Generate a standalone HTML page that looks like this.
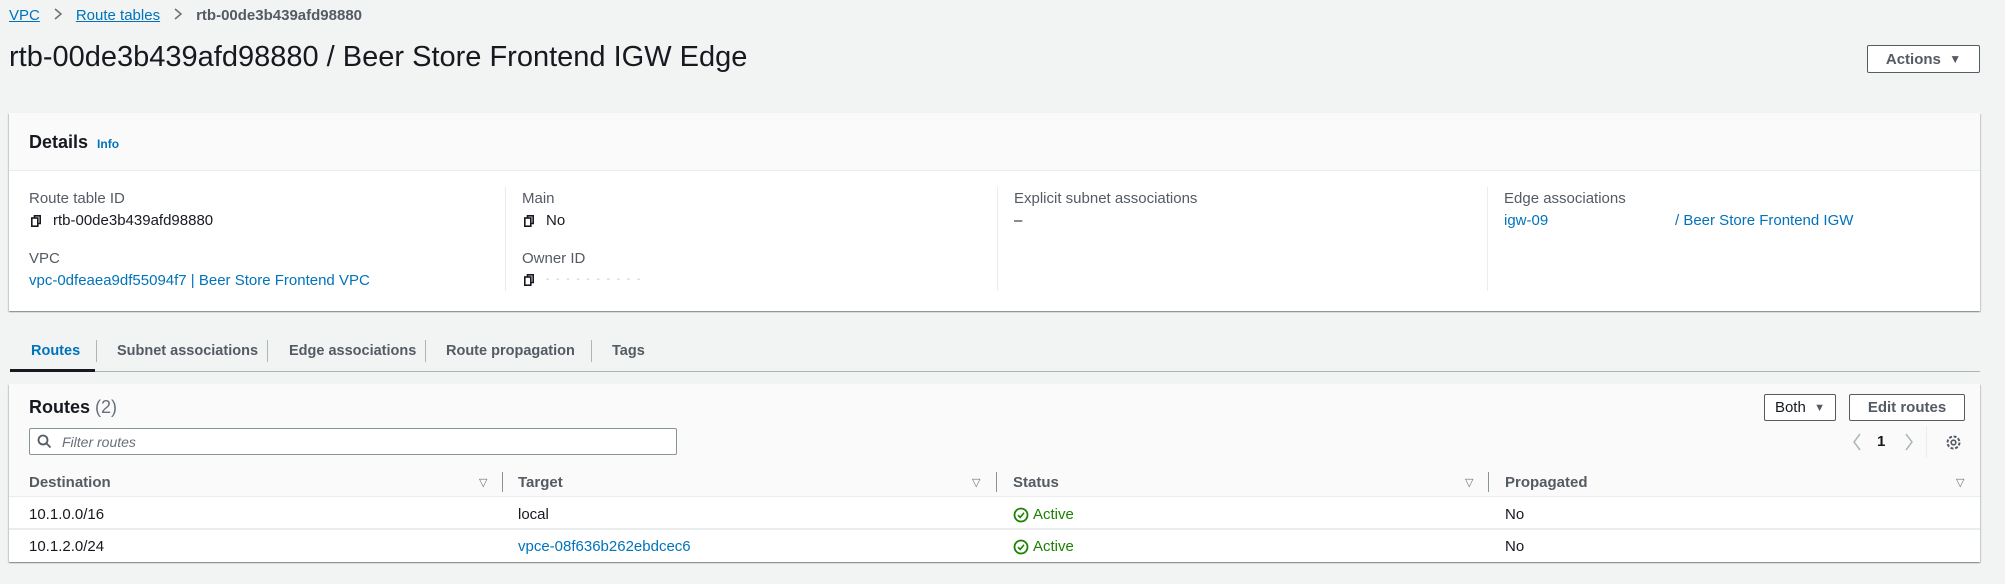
<!DOCTYPE html>
<html><head><meta charset="utf-8"><style>
*{box-sizing:border-box;margin:0;padding:0}
body{width:2005px;height:584px;background:#f2f3f3;font-family:"Liberation Sans",sans-serif;color:#16191f;position:relative;overflow:hidden;font-size:15px}
.a{position:absolute;white-space:nowrap}
.link{color:#0073bb}
.lbl{color:#545b64}
.btn{position:absolute;border:1.5px solid #545b64;background:#fff;border-radius:2px;font-weight:bold;color:#545b64;font-size:15px;display:flex;align-items:center;justify-content:center}
.panel{position:absolute;background:#fff;box-shadow:0 1px 1px 0 rgba(0,28,36,.3),1px 1px 1px 0 rgba(0,28,36,.15),-1px 1px 1px 0 rgba(0,28,36,.15)}
.vd{position:absolute;width:1px;background:#eaeded}
.tri{position:absolute;font-size:11px;color:#687078}
.tab{position:absolute;white-space:nowrap;font-weight:bold;font-size:14.5px;color:#545b64}
.cp{position:absolute;width:10px;height:12px}
</style></head><body>
<div class="a" style="left:9px;top:7px;font-size:15px"><span class="link" style="text-decoration:underline">VPC</span><svg width="36" height="14" style="vertical-align:-1px"><path d="M15 2L21 7L15 12" fill="none" stroke="#687078" stroke-width="1.5"/></svg><span class="link" style="text-decoration:underline">Route tables</span><svg width="36" height="14" style="vertical-align:-1px"><path d="M15 2L21 7L15 12" fill="none" stroke="#687078" stroke-width="1.5"/></svg><span style="color:#545b64;font-weight:bold">rtb-00de3b439afd98880</span></div>
<div class="a" style="left:9px;top:41px;font-size:29px">rtb-00de3b439afd98880 / Beer Store Frontend IGW Edge</div>
<div class="btn" style="left:1867px;top:45px;width:113px;height:28px">Actions&nbsp;&nbsp;<span style="font-size:12px">&#9660;</span></div>

<div class="panel" style="left:9px;top:113px;width:1971px;height:198px">
 <div style="position:absolute;left:0;top:0;right:0;height:58px;background:#fafafa;border-bottom:1px solid #eaeded"></div>
</div>
<div class="a" style="left:29px;top:132px;font-size:18px;font-weight:bold">Details <span class="link" style="font-size:12px;margin-left:4px">Info</span></div>
<div class="vd" style="left:505px;top:187px;height:104px"></div>
<div class="vd" style="left:997px;top:187px;height:104px"></div>
<div class="vd" style="left:1487px;top:187px;height:104px"></div>
<div class="a lbl" style="left:29px;top:190px">Route table ID</div>
<svg class="cp" style="left:31px;top:215px" viewBox="0 0 10 12"><rect x="0.8" y="3" width="6" height="8.2" fill="none" stroke="#16191f" stroke-width="1.6"/><path d="M3.5 3V0.8H9.2V8.5H7" fill="none" stroke="#16191f" stroke-width="1.6"/></svg>
<div class="a" style="left:53px;top:212px">rtb-00de3b439afd98880</div>
<div class="a lbl" style="left:29px;top:250px">VPC</div>
<div class="a link" style="left:29px;top:272px">vpc-0dfeaea9df55094f7 | Beer Store Frontend VPC</div>
<div class="a lbl" style="left:522px;top:190px">Main</div>
<svg class="cp" style="left:524px;top:215px" viewBox="0 0 10 12"><rect x="0.8" y="3" width="6" height="8.2" fill="none" stroke="#16191f" stroke-width="1.6"/><path d="M3.5 3V0.8H9.2V8.5H7" fill="none" stroke="#16191f" stroke-width="1.6"/></svg>
<div class="a" style="left:546px;top:212px">No</div>
<div class="a lbl" style="left:522px;top:250px">Owner ID</div>
<svg class="cp" style="left:524px;top:274px" viewBox="0 0 10 12"><rect x="0.8" y="3" width="6" height="8.2" fill="none" stroke="#16191f" stroke-width="1.6"/><path d="M3.5 3V0.8H9.2V8.5H7" fill="none" stroke="#16191f" stroke-width="1.6"/></svg>
<div class="a" style="left:546px;top:274px;color:#bbb;font-size:10px;letter-spacing:2px">- - - - - - - - - -</div>
<div class="a lbl" style="left:1014px;top:190px">Explicit subnet associations</div>
<div class="a" style="left:1014px;top:212px">–</div>
<div class="a lbl" style="left:1504px;top:190px">Edge associations</div>
<div class="a link" style="left:1504px;top:212px">igw-09</div>
<div class="a link" style="left:1675px;top:212px">/ Beer Store Frontend IGW</div>

<div class="tab" style="left:31px;top:343px;color:#0073bb">Routes</div>
<div class="tab" style="left:117px;top:343px">Subnet associations</div>
<div class="tab" style="left:289px;top:343px">Edge associations</div>
<div class="tab" style="left:446px;top:343px">Route propagation</div>
<div class="tab" style="left:612px;top:343px">Tags</div>
<div class="vd" style="left:96px;top:340px;height:22px;background:#aab7b8"></div>
<div class="vd" style="left:267px;top:340px;height:22px;background:#aab7b8"></div>
<div class="vd" style="left:425px;top:340px;height:22px;background:#aab7b8"></div>
<div class="vd" style="left:591px;top:340px;height:22px;background:#aab7b8"></div>
<div style="position:absolute;left:10px;top:371px;width:1970px;height:1px;background:#aab7b8"></div>
<div style="position:absolute;left:10px;top:369px;width:85px;height:3px;background:#16191f"></div>

<div class="panel" style="left:9px;top:384px;width:1971px;height:178px">
 <div style="position:absolute;left:0;top:0;right:0;height:113px;background:#fafafa;border-bottom:1px solid #eaeded"></div>
 <div style="position:absolute;left:0;top:144px;right:0;height:1px;background:#eaeded"></div>
</div>
<div class="a" style="left:29px;top:397px;font-size:18px;font-weight:bold">Routes <span style="font-weight:normal;color:#687078">(2)</span></div>
<div style="position:absolute;left:29px;top:428px;width:648px;height:27px;border:1.5px solid #879596;background:#fff;border-radius:2px"></div>
<svg class="a" style="left:37px;top:434px" width="15" height="15" viewBox="0 0 15 15"><circle cx="6" cy="6" r="4.5" fill="none" stroke="#545b64" stroke-width="1.8"/><path d="M9.3 9.3L13.5 13.5" stroke="#545b64" stroke-width="1.8"/></svg>
<div class="a" style="left:62px;top:434px;font-style:italic;color:#687078;font-size:14px">Filter routes</div>
<div class="btn" style="left:1764px;top:394px;width:72px;height:27px;color:#16191f;font-weight:normal">Both&nbsp;&nbsp;<span style="font-size:11px;color:#545b64">&#9660;</span></div>
<div class="btn" style="left:1849px;top:394px;width:116px;height:27px">Edit routes</div>
<svg class="a" style="left:1852px;top:433px" width="10" height="18"><path d="M8 1L2 9L8 17" fill="none" stroke="#aab7b8" stroke-width="1.5"/></svg>
<div class="a" style="left:1877px;top:433px;font-weight:bold">1</div>
<svg class="a" style="left:1904px;top:433px" width="10" height="18"><path d="M2 1L8 9L2 17" fill="none" stroke="#aab7b8" stroke-width="1.5"/></svg>
<div class="vd" style="left:1926px;top:426px;height:32px"></div>
<svg class="a" style="left:1945px;top:434px" width="17" height="17" viewBox="0 0 17 17"><circle cx="8.5" cy="8.5" r="6" fill="none" stroke="#545b64" stroke-width="2" stroke-dasharray="3 1.7"/><circle cx="8.5" cy="8.5" r="2.3" fill="none" stroke="#545b64" stroke-width="1.6"/></svg>

<div class="a lbl" style="left:29px;top:474px;font-weight:bold">Destination</div>
<div class="tri" style="left:479px;top:476px">&#9661;</div>
<div class="vd" style="left:502px;top:472px;height:20px;background:#879596"></div>
<div class="a lbl" style="left:518px;top:474px;font-weight:bold">Target</div>
<div class="tri" style="left:972px;top:476px">&#9661;</div>
<div class="vd" style="left:996px;top:472px;height:20px;background:#879596"></div>
<div class="a lbl" style="left:1013px;top:474px;font-weight:bold">Status</div>
<div class="tri" style="left:1465px;top:476px">&#9661;</div>
<div class="vd" style="left:1488px;top:472px;height:20px;background:#879596"></div>
<div class="a lbl" style="left:1505px;top:474px;font-weight:bold">Propagated</div>
<div class="tri" style="left:1956px;top:476px">&#9661;</div>
<div style="position:absolute;left:9px;top:529px;width:1971px;height:1px;background:#eaeded"></div>

<div class="a" style="left:29px;top:506px">10.1.0.0/16</div>
<div class="a" style="left:518px;top:506px">local</div>
<svg class="a" style="left:1013px;top:507px" width="16" height="16"><circle cx="8" cy="8" r="6.5" fill="none" stroke="#1d8102" stroke-width="1.8"/><path d="M5 8.2L7.2 10.4L11 5.8" fill="none" stroke="#1d8102" stroke-width="1.6"/></svg>
<div class="a" style="left:1033px;top:506px;color:#1d8102">Active</div>
<div class="a" style="left:1505px;top:506px">No</div>

<div class="a" style="left:29px;top:538px">10.1.2.0/24</div>
<div class="a link" style="left:518px;top:538px">vpce-08f636b262ebdcec6</div>
<svg class="a" style="left:1013px;top:539px" width="16" height="16"><circle cx="8" cy="8" r="6.5" fill="none" stroke="#1d8102" stroke-width="1.8"/><path d="M5 8.2L7.2 10.4L11 5.8" fill="none" stroke="#1d8102" stroke-width="1.6"/></svg>
<div class="a" style="left:1033px;top:538px;color:#1d8102">Active</div>
<div class="a" style="left:1505px;top:538px">No</div>
</body></html>
